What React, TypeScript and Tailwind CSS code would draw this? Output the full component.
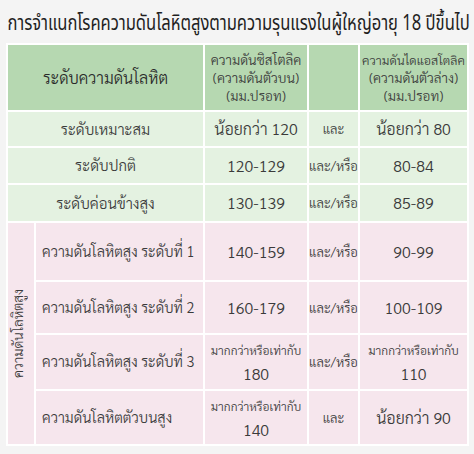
import React from "react"

type Row = {
  name: string
  sys: React.ReactNode
  op: string
  dia: React.ReactNode
  h: string
}

const greenRows: Row[] = [
  { name: "ระดับเหมาะสม", sys: "น้อยกว่า 120", op: "และ", dia: "น้อยกว่า 80", h: "h-[36px]" },
  { name: "ระดับปกติ", sys: "120-129", op: "และ/หรือ", dia: "80-84", h: "h-[37px]" },
  { name: "ระดับค่อนข้างสูง", sys: "130-139", op: "และ/หรือ", dia: "85-89", h: "h-[38px]" },
]

function AtLeast({ value }: { value: string }) {
  return (
    <div className="flex flex-col items-center leading-[23px]">
      <span className="text-[12px]">มากกว่าหรือเท่ากับ</span>
      <span className="text-[16px]">{value}</span>
    </div>
  )
}

const pinkRows: Row[] = [
  { name: "ความดันโลหิตสูง ระดับที่ 1", sys: "140-159", op: "และ/หรือ", dia: "90-99", h: "h-[59px]" },
  { name: "ความดันโลหิตสูง ระดับที่ 2", sys: "160-179", op: "และ/หรือ", dia: "100-109", h: "h-[53px]" },
  {
    name: "ความดันโลหิตสูง ระดับที่ 3",
    sys: <AtLeast value="180" />,
    op: "และ/หรือ",
    dia: <AtLeast value="110" />,
    h: "h-[56px]",
  },
  { name: "ความดันโลหิตตัวบนสูง", sys: <AtLeast value="140" />, op: "และ", dia: "น้อยกว่า 90", h: "h-[55px]" },
]

const cell = "border-2 border-white p-0 text-center align-middle"

export default function App() {
  return (
    <div className="w-[474px] h-[454px] overflow-hidden bg-[#f4f4f4] px-[6px] pt-[9px] font-['Sarabun','Noto_Sans_Thai_Looped',sans-serif] font-light text-[#3a3a3a]">
      <h1 className="font-['Noto_Sans_Thai',sans-serif] font-normal text-[21px] leading-[30px] text-[#1f1f1f] pl-[2px] whitespace-nowrap origin-left scale-x-[0.79]">
        การจำแนกโรคความดันโลหิตสูงตามความรุนแรงในผู้ใหญ่อายุ 18 ปีขึ้นไป
      </h1>
      <table className="mt-[4px] border-collapse table-fixed w-[461px] text-[16px]">
        <colgroup>
          <col className="w-[28px]" />
          <col className="w-[169px]" />
          <col className="w-[104px]" />
          <col className="w-[51px]" />
          <col className="w-[109px]" />
        </colgroup>
        <thead>
          <tr className="h-[67px] bg-[#b6d8b1]">
            <th colSpan={2} className={`${cell} font-light text-[16px] text-[#2a2a2a]`}>
              ระดับความดันโลหิต
            </th>
            <th className={`${cell} font-light text-[13.5px] leading-[18px] whitespace-nowrap`}>
              ความดันซิสโตลิค
              <br />
              (ความดันตัวบน)
              <br />
              (มม.ปรอท)
            </th>
            <th className={cell}></th>
            <th className={`${cell} font-light text-[12.5px] leading-[18px] whitespace-nowrap`}>
              <span className="text-[12.5px]">ความดันไดแอสโตลิค</span>
              <br />
              <span className="text-[13.5px]">(ความดันตัวล่าง)</span>
              <br />
              <span className="text-[13.5px]">(มม.ปรอท)</span>
            </th>
          </tr>
        </thead>
        <tbody>
          {greenRows.map((r) => (
            <tr key={r.name} className={`${r.h} bg-[#e4f2e1]`}>
              <td colSpan={2} className={`${cell} text-[15px]`}>
                {r.name}
              </td>
              <td className={cell}>{r.sys}</td>
              <td className={`${cell} text-[13px] whitespace-nowrap`}>{r.op}</td>
              <td className={cell}>{r.dia}</td>
            </tr>
          ))}
          {pinkRows.map((r, i) => (
            <tr key={r.name} className={`${r.h} bg-[#f6e6ed]`}>
              {i === 0 && (
                <td rowSpan={4} className={cell}>
                  <div className="mx-auto [writing-mode:vertical-rl] rotate-180 whitespace-nowrap text-[13.5px] leading-[20px]">
                    ความดันโลหิตสูง
                  </div>
                </td>
              )}
              <td className={`${cell} text-left pl-[6px] whitespace-nowrap text-[14.5px]`}>{r.name}</td>
              <td className={cell}>{r.sys}</td>
              <td className={`${cell} text-[13px] whitespace-nowrap`}>{r.op}</td>
              <td className={cell}>{r.dia}</td>
            </tr>
          ))}
        </tbody>
      </table>
    </div>
  )
}
